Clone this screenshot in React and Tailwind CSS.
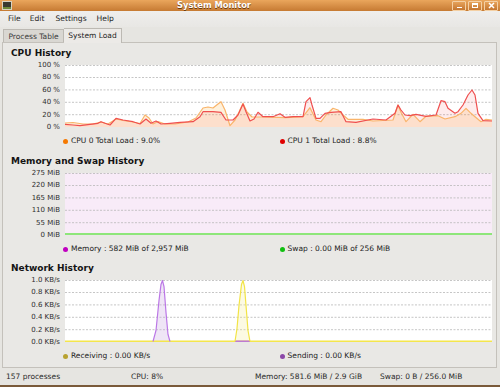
import React from "react";

const W = 427;
const H = 62;

function toLocal(pts, x0, y0) {
  return pts.map(([x, y]) => [x - x0, y - y0]);
}
function line(pts) {
  return pts.map(([x, y]) => `${x.toFixed(1)},${y.toFixed(1)}`).join(" ");
}
function area(pts) {
  const first = pts[0];
  const last = pts[pts.length - 1];
  return `${first[0]},${H} ` + line(pts) + ` ${last[0]},${H}`;
}

const redRaw = [
  [62, 124.3], [70, 125], [77, 125.7], [87, 124.3], [95, 123.3], [98, 121.7], [102, 123.3], [107, 125],
  [113, 118.3], [120, 120], [130, 121.7], [137, 124], [143, 119], [148, 123.3], [153, 121], [158, 124],
  [167, 123.3], [177, 122.3], [190, 121.7], [197, 116.7], [200, 111.7], [210, 111.7], [218, 112.3],
  [223, 120], [230, 120], [235, 115], [240, 104], [243, 111.7], [247, 121], [251, 119], [255, 112.3],
  [260, 116.7], [270, 116.7], [277, 113.7], [282, 117.3], [290, 116.7], [300, 116.7], [303, 101.7],
  [307, 97.7], [309, 105], [313, 118.3], [317, 118.3], [322, 113.3], [328, 112.3], [338, 111.7],
  [343, 121.7], [353, 122.3], [370, 119], [383, 120], [392, 113.3], [395, 105], [398, 110], [402, 115],
  [407, 115.7], [413, 114.3], [423, 116.3], [433, 115], [438, 100.7], [442, 101.7], [445, 108.3],
  [452, 113.3], [455, 111.7], [460, 105], [465, 95], [469, 90], [472, 95], [475, 113.3], [480, 120.7],
  [489, 121],
];
const orangeRaw = [
  [62, 123], [70, 122.5], [80, 124], [90, 124], [98, 122], [105, 124], [113, 119], [120, 120.5],
  [130, 122], [137, 123.5], [142, 115], [146, 118], [150, 124], [155, 121.5], [162, 124], [172, 124],
  [185, 122], [193, 118], [200, 108], [205, 107], [210, 108], [215, 104], [218, 101.7], [222, 110],
  [227, 125.7], [232, 120], [236, 112], [240, 103.3], [244, 112], [249, 117], [260, 117], [283, 117.7],
  [300, 116.7], [307, 107.7], [313, 120], [318, 121.7], [323, 115], [330, 108.3], [335, 110], [340, 115],
  [345, 119.3], [360, 119.3], [370, 121], [390, 120], [395, 105], [398, 112.3], [403, 121.7],
  [410, 114.3], [417, 121.7], [423, 116.3], [435, 115.7], [442, 119], [452, 116.7], [458, 113.3],
  [463, 108.3], [468, 113.3], [472, 116.7], [478, 121.7], [483, 119.3], [489, 120],
];

const red = toLocal(redRaw, 62, 65);
const orange = toLocal(orangeRaw, 62, 65);

const purpleSpike = toLocal(
  [[150, 341], [153, 330], [156, 300], [158, 284], [159.5, 280], [161, 286], [163, 312], [165, 334], [167, 341]],
  62, 279.5
);
const yellowSpike = toLocal(
  [[232, 341], [234, 328], [236, 305], [238.5, 284], [240, 280], [241.5, 286], [243, 305], [245, 330], [247, 341]],
  62, 279.5
);

function Grid() {
  const ys = [0.5, 12.5, 24.9, 37.3, 49.7];
  return (
    <g>
      {ys.map((y) => (
        <line key={y} x1="0" x2={W} y1={y} y2={y} stroke="#b8b8b8" strokeWidth="0.8" strokeDasharray="2 1.5" />
      ))}
    </g>
  );
}

function Chart({ labels, bg, children }) {
  return (
    <div className="flex">
      <div className="w-[62px] h-[72px] flex flex-col justify-between items-end pr-[5px] text-[7px] leading-[10px] text-[#2e2e2e]">
        {labels.map((l) => (
          <div key={l} className="h-[10px] whitespace-nowrap">{l}</div>
        ))}
      </div>
      <div className="mt-[5px] w-[427px] h-[62px]">
        <svg width={W} height={H} viewBox={`0 0 ${W} ${H}`} className="block">
          <rect x="0" y="0" width={W} height={H} fill={bg} />
          <Grid />
          {children}
        </svg>
      </div>
    </div>
  );
}

function Legend({ items }) {
  return (
    <div className="mt-[4px] h-[10px] flex pl-[60px] leading-[10px]">
      {items.map((it) => (
        <div key={it.text} className="w-[217px] flex items-center gap-[2px]">
          <span className="w-[5px] h-[5px] rounded-full mr-[1px]" style={{ background: it.color }} />
          <span className="whitespace-nowrap">{it.text}</span>
        </div>
      ))}
    </div>
  );
}

function Section({ title, children }) {
  return (
    <div className="h-[100px]">
      <div className="h-[14px] leading-[14px] pl-[8px] font-bold text-[9px] text-[#141414]">{title}</div>
      {children}
    </div>
  );
}

export default function App() {
  return (
    <div className="w-[500px] h-[387px] flex flex-col bg-[#e6e5e1] font-['DejaVu_Sans',sans-serif] text-[7.5px] text-[#222] overflow-hidden">
      {/* Title bar */}
      <div className="h-[11px] flex items-center bg-gradient-to-b from-[#eaa65c] to-[#c67a32] relative">
        <div className="ml-[2px] w-[10px] h-[9px] bg-[#3a3a30] border border-[#d8d2c0] flex items-end">
          <div className="w-full h-[2px] bg-[#6d8a3a]" />
        </div>
        <div className="flex-1 text-center pr-[36px] text-white font-bold text-[8.3px] leading-[11px] [text-shadow:0_1px_0_#6a3a0c]">
          System Monitor
        </div>
        <div className="flex gap-[2px] mr-[2px]">
          {["min", "max", "close"].map((k) => (
            <div key={k} className="w-[14px] h-[10px] border border-[#f4d0a4] bg-gradient-to-b from-[#e6a25a] to-[#c47630] rounded-[1px] flex items-center justify-center">
              {k === "min" && <div className="w-[5px] h-[1.5px] bg-white mt-[4px]" />}
              {k === "max" && <div className="w-[6px] h-[5px] border border-white border-t-2" />}
              {k === "close" && (
                <svg width="7" height="7" viewBox="0 0 7 7">
                  <path d="M1 1L6 6M6 1L1 6" stroke="white" strokeWidth="1.5" />
                </svg>
              )}
            </div>
          ))}
        </div>
      </div>

      {/* Menu bar */}
      <div className="h-[16px] flex items-center pl-[8px] gap-[9px] bg-gradient-to-b from-[#efeeec] to-[#e8e7e4] text-[7.6px] text-[#1e1e1e]">
        <span>File</span>
        <span>Edit</span>
        <span className="ml-[2px]">Settings</span>
        <span className="ml-[1px]">Help</span>
      </div>

      {/* Tabs */}
      <div className="h-[15px] flex items-end pl-[3px]">
        <div className="h-[13px] w-[61px] bg-[#d9d7d2] border border-b-0 border-[#bcb9b3] flex items-center justify-center text-[#3a3a3a] leading-[13px]">
          Process Table
        </div>
        <div className="h-[15px] w-[58px] bg-[#eceae7] border border-b-0 border-[#bcb9b3] border-l-0 flex items-center justify-center -mb-[1px] relative z-10 text-[#1e1e1e]">
          System Load
        </div>
      </div>

      {/* Panel */}
      <div className="h-[326px] mx-[2px] mr-[3px] border border-[#c4c1bb] bg-[#e9e8e5] pt-[3px]">
        <Section title="CPU History">
          <Chart labels={["100 %", "80 %", "60 %", "40 %", "20 %", "0 %"]} bg="#ffffff">
            <polygon points={area(orange)} fill="#fcaf3e" fillOpacity="0.18" />
            <polygon points={area(red)} fill="#ef2929" fillOpacity="0.09" />
            <polyline points={line(orange)} fill="none" stroke="#f9b46a" strokeWidth="1.2" strokeLinejoin="round" />
            <polyline points={line(red)} fill="none" stroke="#ef4f4f" strokeWidth="1.2" strokeLinejoin="round" />
          </Chart>
          <Legend
            items={[
              { color: "#f57900", text: "CPU 0 Total Load : 9.0%" },
              { color: "#e00000", text: "CPU 1 Total Load : 8.8%" },
            ]}
          />
        </Section>

        <div className="mt-[8px]">
          <Section title="Memory and Swap History">
            <Chart labels={["275 MiB", "220 MiB", "165 MiB", "110 MiB", "55 MiB", "0 MiB"]} bg="#f8ebf8">
              <line x1="0" x2={W} y1={H - 1} y2={H - 1} stroke="#8ee67a" strokeWidth="2" />
            </Chart>
            <Legend
              items={[
                { color: "#c000c0", text: "Memory : 582 MiB of 2,957 MiB" },
                { color: "#10c010", text: "Swap : 0.00 MiB of 256 MiB" },
              ]}
            />
          </Section>
        </div>

        <div className="mt-[7px]">
          <Section title="Network History">
            <Chart labels={["1.0 KB/s", "0.8 KB/s", "0.6 KB/s", "0.4 KB/s", "0.2 KB/s", "0.0 KB/s"]} bg="#ffffff">
              <polygon points={line(purpleSpike)} fill="#c9a8e0" fillOpacity="0.3" />
              <polygon points={line(yellowSpike)} fill="#f2ea90" fillOpacity="0.25" />
              <line x1="0" x2={W} y1={H - 0.8} y2={H - 0.8} stroke="#f4e64c" strokeWidth="1.4" />
              <line x1={170} x2={185} y1={H - 0.8} y2={H - 0.8} stroke="#b86ee0" strokeWidth="1.4" />
              <polyline points={line(purpleSpike)} fill="none" stroke="#bb77e6" strokeWidth="1.2" />
              <polyline points={line(yellowSpike)} fill="none" stroke="#f2e446" strokeWidth="1.2" />
            </Chart>
            <Legend
              items={[
                { color: "#b8a230", text: "Receiving : 0.00 KB/s" },
                { color: "#8c48a8", text: "Sending : 0.00 KB/s" },
              ]}
            />
          </Section>
        </div>
      </div>

      {/* Status bar */}
      <div className="h-[17px] flex items-center text-[7.5px] text-[#2a2a2a]">
        <div className="w-[131px] pl-[6px]">157 processes</div>
        <div className="w-[124px]">CPU: 8%</div>
        <div className="w-[125px]">Memory: 581.6 MiB / 2.9 GiB</div>
        <div>Swap: 0 B / 256.0 MiB</div>
      </div>
      <div className="h-[2px] bg-[#7a5a3a]" />
    </div>
  );
}
